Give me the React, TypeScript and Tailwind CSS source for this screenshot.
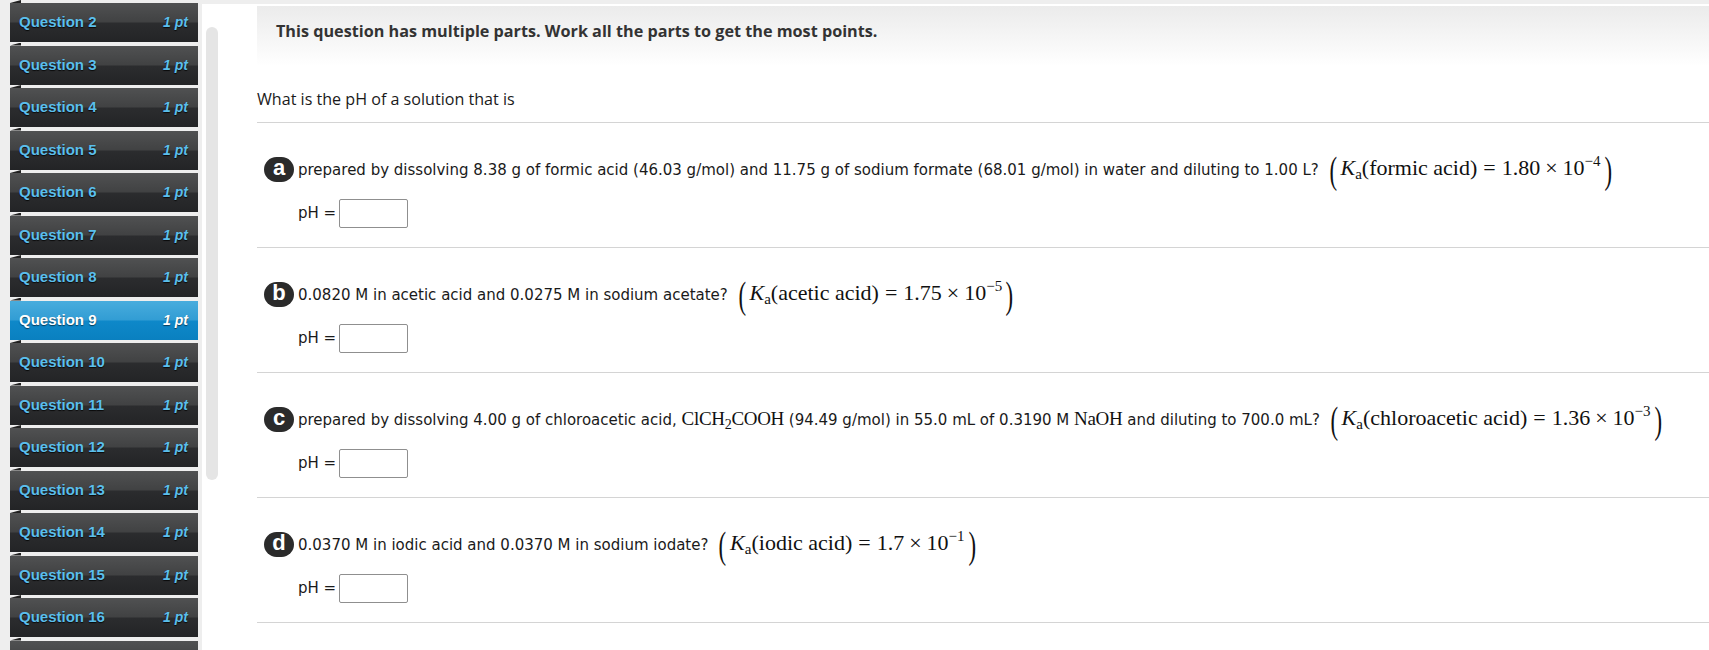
const questions = [2, 3, 4, 5, 6, 7, 8, 9, 10, 11, 12, 13, 14, 15, 16];
const ACTIVE = 9;

const verdana = "font-['DejaVu_Sans',Verdana,sans-serif]";
const serif = "font-['Liberation_Serif','Times_New_Roman',serif]";

const barDark = "bg-[linear-gradient(to_bottom,#505152_0%,#414243_48%,#2b2c2e_52%,#232426_100%)]";
const barBlue = "bg-[linear-gradient(to_bottom,#48acdd_0%,#329dd4_48%,#0e88c9_52%,#0a80c0_100%)]";

function SidebarItem({ n }: { n: number }) {
  const active = n === ACTIVE;
  return (
    <div
      className={`relative h-[39px] mb-[3.5px] flex items-center justify-between pl-[9px] pr-[10px] font-['Liberation_Sans',Arial,sans-serif] font-bold ${
        active
          ? `${barBlue} text-white [text-shadow:0_1px_1px_rgba(0,0,0,0.55)]`
          : `${barDark} text-[#5bbfec] [text-shadow:0_1px_1px_rgba(0,0,0,0.8)]`
      }`}
    >
      <div className="absolute left-0 -top-[3px] w-[11px] h-[3px] bg-[#222] [clip-path:polygon(0_100%,100%_0,100%_100%)]" />
      <span className="text-[15px]">Question {n}</span>
      <span className="text-[14px] italic">1 pt</span>
    </div>
  );
}

function Ka({ acid, value, exp }: { acid: string; value: string; exp: string }) {
  return (
    <span className={`${serif} text-[22px] text-[#111] ml-[8px]`}>
      <span className="inline-block text-[38px] leading-none scale-x-60 align-[-8px] mr-[1px]">(</span>
      <span className="italic">K</span>
      <span className="text-[15px] align-[-4px]">a</span>
      <span>({acid})</span>
      <span className="mx-[6px]">=</span>
      <span>{value}</span>
      <span className="mx-[5px]">×</span>
      <span>10</span>
      <span className="text-[15px] align-[9px]">−{exp}</span>
      <span className="inline-block text-[38px] leading-none scale-x-60 align-[-8px] ml-[1px]">)</span>
    </span>
  );
}

function Chem({ children }: { children: React.ReactNode }) {
  return <span className={`${serif} text-[19px] tracking-[-0.3px] text-[#111]`}>{children}</span>;
}

function Part({ letter, children }: { letter: string; children: React.ReactNode }) {
  return (
    <div className="pt-[28px] pb-[19px] border-b border-[#d4d4d4]">
      <div className="flex items-center h-[36px] pl-[7px]">
        <div className="w-[30px] h-[25px] mr-[4px] rounded-full bg-[#2b2b2b] flex items-center justify-center text-white font-['Liberation_Sans',Arial,sans-serif] font-bold text-[22px] leading-none pb-[2px]">
          {letter}
        </div>
        <div className={`${verdana} text-[15px] leading-[22px] text-[#1a1a1a] whitespace-nowrap`}>{children}</div>
      </div>
      <div className={`mt-[12px] flex items-center pl-[41px] ${verdana} text-[15px] text-[#1a1a1a]`}>
        <span className="mr-[3px]">pH =</span>
        <div className="w-[69px] h-[29px] border border-[#8f8f8f] rounded-[2px] bg-white" />
      </div>
    </div>
  );
}

export default function App() {
  return (
    <div className="flex h-[650px] w-[1709px] overflow-hidden bg-[#eeeeee]">
      <div className="w-[202px] shrink-0 pl-[10px] pr-[4px] pt-[3px]">
        {questions.map((n) => (
          <SidebarItem key={n} n={n} />
        ))}
        <div className={`relative h-[39px] ${barDark}`}>
          <div className="absolute left-0 -top-[3px] w-[11px] h-[3px] bg-[#222] [clip-path:polygon(0_100%,100%_0,100%_100%)]" />
        </div>
      </div>

      <div className="flex-1 mt-[4px] bg-white flex">
        <div className="w-[55px] shrink-0">
          <div className="ml-[4px] mt-[23px] w-[12px] h-[453px] rounded-full bg-[#e5e5e5]" />
        </div>

        <div className="flex-1 flex flex-col">
          <div className="mt-[2px] h-[60px] bg-linear-to-b from-[#ebebeb] to-white pl-[19px] pt-[14px] font-['Open_Sans',sans-serif] font-bold text-[16.2px] leading-[22px] text-[#333]">
            This question has multiple parts. Work all the parts to get the most points.
          </div>

          <div className="mt-[22px] pb-[12px] border-b border-[#d4d4d4] font-['Open_Sans',sans-serif] text-[16.1px] leading-[22px] text-[#1a1a1a]">
            What is the pH of a solution that is
          </div>

          <Part letter="a">
            prepared by dissolving 8.38 g of formic acid (46.03 g/mol) and 11.75 g of sodium formate (68.01 g/mol) in water and diluting to 1.00 L?
            <Ka acid="formic acid" value="1.80" exp="4" />
          </Part>

          <Part letter="b">
            0.0820 M in acetic acid and 0.0275 M in sodium acetate?
            <Ka acid="acetic acid" value="1.75" exp="5" />
          </Part>

          <Part letter="c">
            prepared by dissolving 4.00 g of chloroacetic acid,{" "}
            <Chem>
              ClCH<span className="text-[14px] align-[-4px]">2</span>COOH
            </Chem>{" "}
            (94.49 g/mol) in 55.0 mL of 0.3190 M <Chem>NaOH</Chem> and diluting to 700.0 mL?
            <Ka acid="chloroacetic acid" value="1.36" exp="3" />
          </Part>

          <Part letter="d">
            0.0370 M in iodic acid and 0.0370 M in sodium iodate?
            <Ka acid="iodic acid" value="1.7" exp="1" />
          </Part>
        </div>
      </div>
    </div>
  );
}
